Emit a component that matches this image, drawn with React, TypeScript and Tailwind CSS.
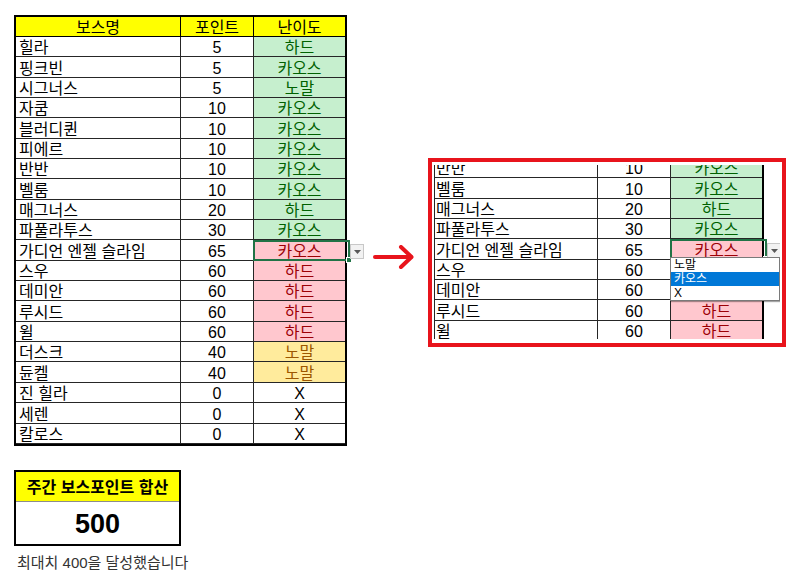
import React from "react";

type Kind = "g" | "r" | "y" | "x";
type RowData = [string, string, string, Kind];

const rows: RowData[] = [
  ["힐라", "5", "하드", "g"],
  ["핑크빈", "5", "카오스", "g"],
  ["시그너스", "5", "노말", "g"],
  ["자쿰", "10", "카오스", "g"],
  ["블러디퀸", "10", "카오스", "g"],
  ["피에르", "10", "카오스", "g"],
  ["반반", "10", "카오스", "g"],
  ["벨룸", "10", "카오스", "g"],
  ["매그너스", "20", "하드", "g"],
  ["파풀라투스", "30", "카오스", "g"],
  ["가디언 엔젤 슬라임", "65", "카오스", "r"],
  ["스우", "60", "하드", "r"],
  ["데미안", "60", "하드", "r"],
  ["루시드", "60", "하드", "r"],
  ["윌", "60", "하드", "r"],
  ["더스크", "40", "노말", "y"],
  ["듄켈", "40", "노말", "y"],
  ["진 힐라", "0", "X", "x"],
  ["세렌", "0", "X", "x"],
  ["칼로스", "0", "X", "x"],
];

const heights = [20, 21, 20, 20, 21, 20, 20, 21, 20, 20, 21, 20, 20, 21, 20, 20, 21, 20, 21, 20];

const kindCls: Record<Kind, string> = {
  g: "bg-[#c6efce] text-[#006100]",
  r: "bg-[#ffc7ce] text-[#9c0006]",
  y: "bg-[#ffeb9c] text-[#9c5700]",
  x: "bg-white text-black",
};

function DropButton() {
  return (
    <div className="absolute left-[calc(100%+5px)] top-[4px] w-[14px] h-[15px] border border-[#c8c8c8] bg-[#f2f2f2] flex items-center justify-center">
      <svg width="7" height="4" viewBox="0 0 7 4">
        <path d="M0 0h7L3.5 4z" fill="#595959" />
      </svg>
    </div>
  );
}

function Selection() {
  return (
    <>
      <div className="absolute left-[-1px] top-0 right-[-5px] bottom-[-1px] border-2 border-[#217346] pointer-events-none" />
      <div className="absolute right-[-7px] bottom-[-3px] w-[6px] h-[6px] bg-[#217346] border border-white" />
    </>
  );
}

function DropList() {
  return (
    <div className="absolute left-[-1px] top-[18px] w-[110px] bg-white border border-[#7a7a7a] shadow-[1px_1px_1px_rgba(0,0,0,0.35)] z-10 text-[12px] leading-[14px] text-black">
      <div className="h-[14px] pl-[3px]">노말</div>
      <div className="h-[14px] pl-[3px] bg-[#0078d7] text-white">카오스</div>
      <div className="h-[14px] pl-[3px]">X</div>
    </div>
  );
}

function Row({ r, h, selected, list }: { r: RowData; h: number; selected?: boolean; list?: boolean }) {
  const [name, pts, diff, k] = r;
  return (
    <div className="grid grid-cols-[165px_73px_91px] border-b border-[#262626]" style={{ height: h }}>
      <div className="border-r border-[#262626] pl-[3px] pt-[3px] flex items-center whitespace-nowrap text-black">{name}</div>
      <div className="border-r border-[#262626] pt-[3px] flex items-center justify-center text-black">{pts}</div>
      <div className={`relative pt-[3px] flex items-center justify-center ${kindCls[k]}`}>
        {diff}
        {selected && <Selection />}
        {selected && <DropButton />}
        {list && <DropList />}
      </div>
    </div>
  );
}

export default function App() {
  return (
    <div className="w-[800px] h-[585px] bg-white font-['Liberation_Sans','Noto_Sans_CJK_KR',sans-serif] text-[16px] leading-none flex items-start">
      {/* Left column */}
      <div className="ml-[14px] mt-[15px] flex flex-col">
        <div className="w-[333px] border-2 border-black">
          <div className="grid grid-cols-[165px_73px_91px] h-[20px] bg-[#ffff00] border-b border-black text-black">
            <div className="border-r border-black pt-[3px] flex items-center justify-center">보스명</div>
            <div className="border-r border-black pt-[3px] flex items-center justify-center">포인트</div>
            <div className="pt-[3px] flex items-center justify-center">난이도</div>
          </div>
          {rows.map((r, i) => (
            <Row key={i} r={r} h={heights[i]} selected={i === 10} />
          ))}
        </div>

        <div className="mt-[24px] w-[167px] border-2 border-black">
          <div className="h-[30px] pt-[2px] bg-[#ffff00] border-b border-[#8c8c8c] flex items-center justify-center font-bold text-[16px] text-black">
            주간 보스포인트 합산
          </div>
          <div className="h-[42px] pt-[2px] flex items-center justify-center font-bold text-[27px] text-black">500</div>
        </div>
        <div className="mt-[7px] ml-[3px] text-[15px] leading-[20px] text-[#333333]">최대치 400을 달성했습니다</div>
      </div>

      {/* Arrow */}
      <div className="ml-[26px] mt-[245px] w-[41px] h-[24px]">
        <svg width="41" height="24" viewBox="0 0 41 24">
          <path d="M2 12H38" stroke="#e8141c" strokeWidth="4" strokeLinecap="round" />
          <path d="M28 2L38.5 12L28 22" stroke="#e8141c" strokeWidth="4" strokeLinecap="round" strokeLinejoin="round" fill="none" />
        </svg>
      </div>

      {/* Right zoom panel */}
      <div className="ml-[14px] mt-[158px] border-4 border-[#e8141c] bg-white pt-[3px] pb-[4px] px-[2px]">
        <div className="w-[346px] h-[174px] border-l border-[#262626] overflow-hidden">
          <div className="w-[333px] ml-[-4px] mt-[-7px] border-x-2 border-black">
            {rows.slice(6, 15).map((r, j) => {
              const i = j + 6;
              return <Row key={i} r={r} h={heights[i]} selected={i === 10} list={i === 10} />;
            })}
          </div>
        </div>
      </div>
    </div>
  );
}
